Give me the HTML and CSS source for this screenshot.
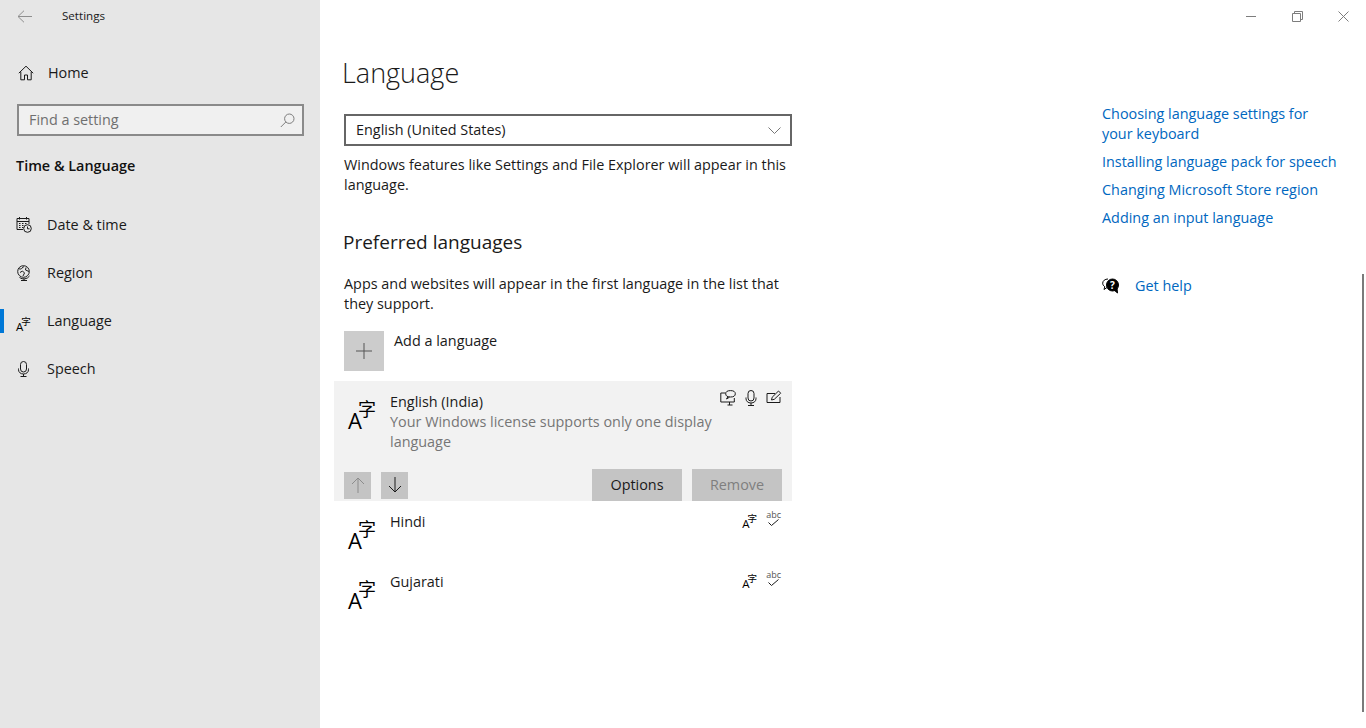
FILE: index.html
```html
<!DOCTYPE html>
<html lang="en">
<head>
  <meta charset="UTF-8" />
  <title>Settings</title>
  <link rel="stylesheet" href="styles.css">
</head>
<body>

  <div class="sidebar">
    <div class="title-row">
      <svg class="back" width="15" height="13" viewBox="0 0 15 13"><path d="M7 .7 1 6.500l6 5.800M1 6.500h14" /></svg>
      <span class="app-name">Settings</span>
    </div>
    <div class="home-row">
      <svg class="ico" width="16" height="16" viewBox="0 0 16 16"><path d="M.8 8.200 8 1.200l7.200 7M2.800 6.800v8h3.700V10h3v4.800h3.700v-8" /></svg>
      <span>Home</span>
    </div>
    <div class="search">
      <span>Find a setting</span>
      <svg width="15" height="15" viewBox="0 0 15 15"><circle cx="9.300" cy="5.700" r="4.700" /><path d="M5.800 9 .8 14" /></svg>
    </div>
    <div class="section-title">Time &amp; Language</div>

    <div class="nav">
      <div class="nav-item">
        <svg class="ico" width="16" height="16" viewBox="0 0 16 16"><path d="M7 12.500H1V1.500h12v5.500M1 4.500h12M3.500 0v2.500M10.500 0v2.500" /><path class="dots" d="M3 6.500h1.500M6 6.500h1.500M9 6.500h1.500M3 8.500h1.500M6 8.500h1.500M3 10.500h1.500M6 10.500h1.500" /><circle cx="11.500" cy="11.500" r="3.800" /><path d="M11.500 9.500v2.300h2" /></svg>
        <span>Date &amp; time</span>
      </div>
      <div class="nav-item">
        <svg class="ico" width="16" height="16" viewBox="0 0 16 16"><circle cx="7.500" cy="6.500" r="5.800" /><path d="M2.500 3.500c2 1 3 .5 3.500-.5l2-1.500M4 7.500l2.500-1.500 2 2-1.500 3M10 2.500l-.5 2.500 3.500 1.500M13.500 11A7 7 0 0 1 3.500 12.500M8 13.500v2M5 15.500h6" /></svg>
        <span>Region</span>
      </div>
      <div class="nav-item active">
        <span class="lang-glyph small"><span class="a">A</span><span class="zi">字</span></span>
        <span>Language</span>
      </div>
      <div class="nav-item">
        <svg class="ico" width="16" height="16" viewBox="0 0 16 16"><rect x="4.500" y=".5" width="6" height="10.500" rx="3" /><path d="M2.500 7.500v1.200c0 2.500 2 4.300 5 4.300s5-1.800 5-4.300V7.500M7.500 13v2.500M4.500 15.500h6" /></svg>
        <span>Speech</span>
      </div>
    </div>
  </div>

  <div class="main">
    <div class="window-controls">
      <svg width="11" height="11" viewBox="0 0 11 11"><path d="M0 5.500h10" /></svg>
      <svg width="11" height="11" viewBox="0 0 11 11"><path d="M.5 2.500h8v8h-8zM2.500 2.500v-2h8v8h-2" /></svg>
      <svg width="11" height="11" viewBox="0 0 11 11"><path d="M.5.500l10 10M10.500.500l-10 10" /></svg>
    </div>

    <div class="columns">
      <div class="content">
        <h1>Language</h1>
        <div class="combo">
          <span>English (United States)</span>
          <svg width="13" height="7" viewBox="0 0 13 7"><path d="M.5.500l6 6 6-6" /></svg>
        </div>
        <p class="note">Windows features like Settings and File Explorer will appear in this language.</p>

        <h2>Preferred languages</h2>
        <p class="note">Apps and websites will appear in the first language in the list that they support.</p>

        <div class="add-row">
          <div class="add-btn"><svg width="16" height="16" viewBox="0 0 16 16"><path d="M8 0v16M0 8h16" /></svg></div>
          <span>Add a language</span>
        </div>

        <div class="lang-row selected">
          <div class="lang-top">
            <span class="lang-glyph"><span class="a">A</span><span class="zi">字</span></span>
            <div class="lang-text">
              <div>English (India)</div>
              <div class="sub">Your Windows license supports only one display language</div>
            </div>
            <div class="caps">
              <svg width="16" height="16" viewBox="0 0 16 16"><path d="M5.500 3H.8v9h13.500V8M7.500 15h5M9.500 12v3" /><ellipse cx="10.500" cy="3.800" rx="4.800" ry="3.200" /><path d="M8 6.500 6.500 9l3-1.800" /></svg>
              <svg width="16" height="16" viewBox="0 0 16 16"><rect x="5" y=".5" width="6" height="10.500" rx="3" /><path d="M3 7.500v1.200C3 11.200 5 13 8 13s5-1.800 5-4.300V7.500M8 13v2.500M5 15.500h6" /></svg>
              <svg width="16" height="16" viewBox="0 0 16 16"><path d="M9 3.500H1v9h13V7M5.500 10l.7-2.800L12.500 1l2.200 2.200L8.300 9.300z" /></svg>
            </div>
          </div>
          <div class="lang-actions">
            <div class="arrow-btn off"><svg width="14" height="16" viewBox="0 0 14 16"><path d="M1 7l6-6 6 6M7 1v15" /></svg></div>
            <div class="arrow-btn"><svg width="14" height="16" viewBox="0 0 14 16"><path d="M1 9l6 6 6-6M7 15V0" /></svg></div>
            <div class="push-btn first">Options</div>
            <div class="push-btn off">Remove</div>
          </div>
        </div>

        <div class="lang-row">
          <div class="lang-top">
            <span class="lang-glyph"><span class="a">A</span><span class="zi">字</span></span>
            <div class="lang-text"><div>Hindi</div></div>
            <div class="caps two">
              <span class="lang-glyph small"><span class="a">A</span><span class="zi">字</span></span>
              <span class="spell">abc<svg width="11" height="7" viewBox="0 0 11 7"><path d="M.5 3.500 3.500 6.500 10.500.5" /></svg></span>
            </div>
          </div>
        </div>

        <div class="lang-row">
          <div class="lang-top">
            <span class="lang-glyph"><span class="a">A</span><span class="zi">字</span></span>
            <div class="lang-text"><div>Gujarati</div></div>
            <div class="caps two">
              <span class="lang-glyph small"><span class="a">A</span><span class="zi">字</span></span>
              <span class="spell">abc<svg width="11" height="7" viewBox="0 0 11 7"><path d="M.5 3.500 3.500 6.500 10.500.5" /></svg></span>
            </div>
          </div>
        </div>
      </div>

      <div class="aside">
        <a>Choosing language settings for your keyboard</a>
        <a>Installing language pack for speech</a>
        <a>Changing Microsoft Store region</a>
        <a>Adding an input language</a>
        <div class="help">
          <svg width="17" height="16" viewBox="0 0 17 16"><path class="outline" d="M6 1C3 1 .7 2.800.7 5.200c0 1.500.8 2.700 2.100 3.500L2 11.500l3-2" /><circle class="solid" cx="10.500" cy="7" r="6" /><path class="solid" d="M12 12l3.500 3-.5-5z" /><text x="10.500" y="10.500">?</text></svg>
          <a>Get help</a>
        </div>
      </div>
    </div>

    <div class="scrollbar"></div>
  </div>

</body>
</html>
```

FILE: styles.css
```css
* {
  box-sizing: border-box;
}

html, body {
  height: 100%;
}

body {
  margin: 0;
  display: flex;
  height: 728px;
  overflow: hidden;
  font-family: "Open Sans", "Noto Sans CJK SC", sans-serif;
  font-size: 14.4px;
  line-height: 20px;
  color: #1a1a1a;
  background: #fff;
}

svg {
  fill: none;
  stroke: #1a1a1a;
  stroke-width: 1;
  flex: none;
}

.sidebar {
  width: 320px;
  flex: none;
  background: #e6e6e6;
}

.title-row {
  display: flex;
  align-items: center;
  height: 32px;
  padding-left: 17px;
}

.back {
  stroke: #8f8f8f;
}

.app-name {
  margin-left: 30px;
  font-size: 11.6px;
}

.home-row {
  display: flex;
  align-items: center;
  gap: 14px;
  height: 24px;
  margin-top: 29px;
  padding-left: 18px;
}

.search {
  display: flex;
  align-items: center;
  justify-content: space-between;
  width: 287px;
  height: 32px;
  margin: 19px 0 0 17px;
  padding: 0 7px 0 10px;
  border: 2px solid #8a8a8a;
  background: #f0f0f0;
  color: #6f6f6f;
}

.search svg {
  stroke: #7d7d7d;
}

.section-title {
  margin: 20px 0 0 16px;
  font-weight: 600;
  color: #111;
}

.nav {
  margin-top: 25px;
}

.nav-item {
  display: flex;
  align-items: center;
  gap: 15px;
  height: 48px;
  padding-left: 16px;
  position: relative;
}

.nav-item.active::before {
  content: "";
  position: absolute;
  left: 0;
  top: 12px;
  width: 4px;
  height: 24px;
  background: #0078d7;
}

.dots {
  stroke-width: 1.200;
}

.lang-glyph {
  display: inline-block;
  flex: none;
  width: 30px;
  height: 32px;
  line-height: 32px;
  color: #000;
  white-space: nowrap;
}

.lang-glyph .a {
  font-size: 22px;
  vertical-align: -6px;
}

.lang-glyph .zi {
  font-family: "Noto Sans CJK SC", sans-serif;
  font-size: 18px;
  margin-left: -4px;
  vertical-align: 7px;
}

.lang-glyph.small {
  width: 16px;
  height: 16px;
  line-height: 16px;
}

.lang-glyph.small .a {
  font-size: 11.500px;
  vertical-align: -3px;
}

.lang-glyph.small .zi {
  font-size: 9.500px;
  margin-left: -2px;
  vertical-align: 3px;
}

.main {
  flex: 1;
  position: relative;
}

.window-controls {
  display: flex;
  justify-content: flex-end;
  align-items: center;
  gap: 35px;
  height: 32px;
  padding-right: 17px;
}

.window-controls svg {
  stroke: #7d7d7d;
}

.columns {
  display: flex;
  padding-left: 14px;
}

.content {
  width: 458px;
  flex: none;
}

h1 {
  margin: 21px 0 0 8px;
  font-size: 27px;
  font-weight: 300;
  line-height: 40px;
}

.combo {
  display: flex;
  align-items: center;
  justify-content: space-between;
  width: 448px;
  height: 32px;
  margin: 21px 0 0 10px;
  padding: 0 9px 0 10px;
  border: 2px solid #666;
}

.combo svg {
  stroke: #777;
}

.note {
  margin: 9px 0 0 10px;
  width: 448px;
}

h2 {
  margin: 33px 0 0 9px;
  font-size: 19px;
  font-weight: 400;
  line-height: 28px;
}

h2 + .note {
  margin-top: 18px;
}

.add-row {
  display: flex;
  gap: 10px;
  height: 40px;
  margin: 17px 0 0 10px;
}

.add-btn {
  display: flex;
  align-items: center;
  justify-content: center;
  width: 40px;
  height: 40px;
  background: #ccc;
}

.add-btn svg {
  stroke: #555;
}

.lang-row {
  padding: 11px 10px 0 14px;
  height: 60px;
}

.lang-row.selected {
  height: 120px;
  margin-top: 10px;
  background: #f2f2f2;
}

.lang-top {
  display: flex;
}

.lang-text {
  flex: 1;
  margin-left: 12px;
}

.sub {
  color: #767676;
}

.caps {
  display: flex;
  gap: 7px;
  margin-top: -2px;
}

.caps.two {
  gap: 8px;
  padding-right: 1px;
}

.spell {
  display: flex;
  flex-direction: column;
  align-items: center;
  font-size: 9px;
  line-height: 9px;
  color: #555;
}

.lang-actions {
  display: flex;
  align-items: center;
  gap: 10px;
  margin: 17px 0 0 -4px;
}

.arrow-btn {
  display: flex;
  align-items: center;
  justify-content: center;
  width: 27px;
  height: 27px;
  background: #c4c4c4;
}

.arrow-btn.off svg {
  stroke: #8c8c8c;
}

.push-btn {
  width: 90px;
  height: 32px;
  line-height: 32px;
  text-align: center;
  background: #c4c4c4;
}

.push-btn.first {
  margin-left: auto;
}

.push-btn.off {
  color: #7f7f7f;
}

.aside {
  margin: 72px 0 0 310px;
  width: 240px;
}

.aside a {
  display: block;
  color: #0067c0;
  margin-bottom: 8px;
}

.help {
  display: flex;
  align-items: center;
  gap: 16px;
  margin-top: 48px;
}

.help a {
  margin: 0;
}

.help .solid {
  fill: #000;
  stroke: #000;
}

.help .outline {
  stroke: #000;
}

.help text {
  fill: #fff;
  stroke: none;
  font-size: 10px;
  font-weight: 700;
  text-anchor: middle;
}

.scrollbar {
  position: absolute;
  right: 2px;
  top: 274px;
  width: 2px;
  height: 438px;
  background: #7a7a7a;
}
```
